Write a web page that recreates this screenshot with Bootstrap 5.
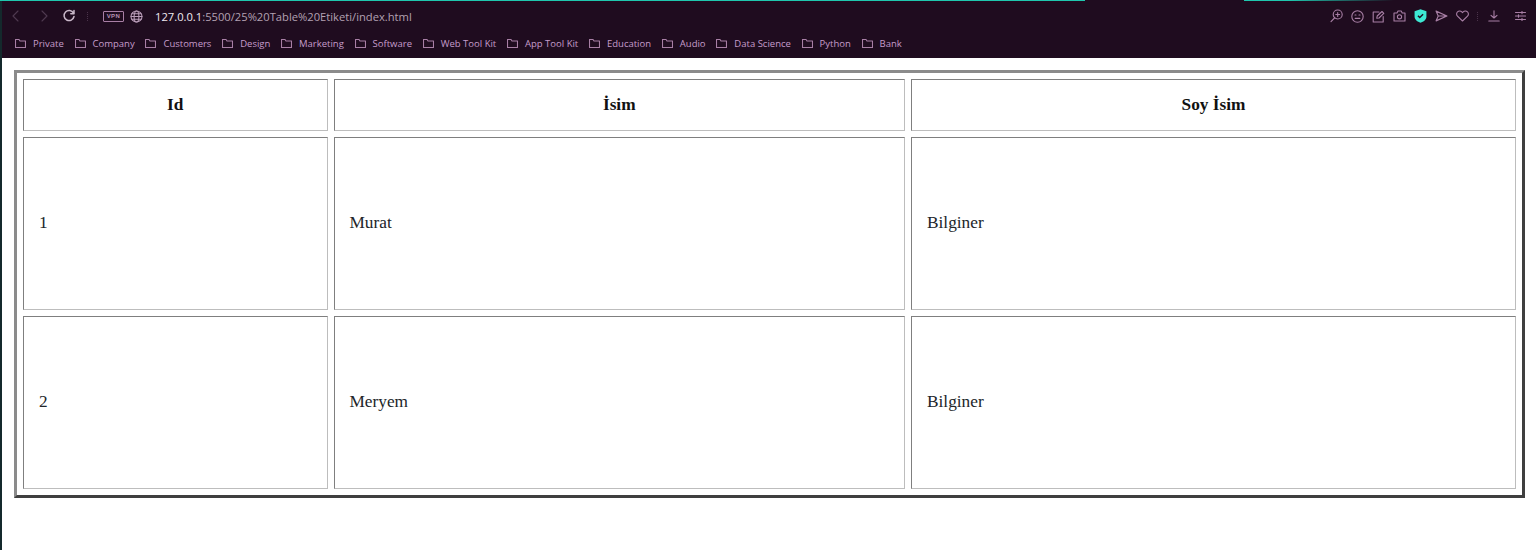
<!DOCTYPE html>
<html lang="tr">
<head>
<meta charset="utf-8">
<title>Table Etiketi</title>
<link href="https://cdn.jsdelivr.net/npm/bootstrap@5.3.0/dist/css/bootstrap.min.css" rel="stylesheet">
<style>
html,body{height:550px;overflow:hidden;background:#fff}
.shell{height:550px;border-left:2px solid #14292c}
.chrome{height:58px;background:#1f0c1f;position:relative}
.topline{position:absolute;top:0;height:1px;background:#1fc7ae}
.tl1{left:-2px;width:1085px}
.tl2{left:1242px;width:150px;background:linear-gradient(90deg,#1fc7ae 0%,#1fc7ae 30%,#1f0c1f 100%)}
.toolbar{height:32px;padding-left:8px;padding-right:10px}
.ic{display:block;fill:none;stroke:#a87fa5;stroke-width:1.1;stroke-linecap:round;stroke-linejoin:round}
.ic-dim{stroke:#4f3a50}
.ic-white{stroke:#c9b8c9;stroke-width:1.5}
.ic-globe{stroke:#b99cb8;margin-left:6px}
.fwd{margin-left:16px}
.reload{margin-left:12px}
.vsep{width:1px;height:9px;border-left:1px dotted #4a334a}
.sep-left{margin-left:11px;margin-right:15px}
.vpnbox{display:block;width:21px;height:11px;border:1px solid #a87fa5;border-radius:1px;font:600 6px/9px "Liberation Sans",sans-serif;letter-spacing:.4px;color:#b58fb2;text-align:center}
.urltext{font:400 11.2px "Open Sans","Liberation Sans",sans-serif;color:#b3a1b2;margin-left:12px;white-space:nowrap}
.urltext b{font-weight:500;color:#f0eaf0}
.bookmarks{height:22px;padding-left:13px;gap:10.750px}
.bm{gap:7px;font:9.5px "Open Sans","Liberation Sans",sans-serif;color:#c69ccb;white-space:nowrap}
.rightgroup{margin-left:auto;gap:8px}
.after-sep{margin-left:2px}
.sliders{margin-left:7px}
.pagewrap{padding:12px 10px 0 12px}
table.gridtable{width:1511px;height:428px;border-collapse:separate;border-spacing:6px;border:3px solid;border-color:#8b8b8b #3f3f3f #3f3f3f #8b8b8b;font-family:"Liberation Serif","Times New Roman",serif;font-size:17.3px;color:#212529;table-layout:fixed}
.gridtable th,.gridtable td{border:1px solid;border-color:#7f7f7f #bdbdbd #bdbdbd #7f7f7f;padding:0 15px}
.gridtable th{text-align:center;font-weight:700;color:#111;height:52px}
.gridtable td{height:172.500px;padding-bottom:2px}
.c1{width:304.500px}.c2{width:571.500px}
</style>
</head>
<body>
<div class="shell">
<header class="chrome">
<div class="topline tl1"></div><div class="topline tl2"></div>
<div class="toolbar d-flex align-items-center">
  <div class="d-flex align-items-center">
    <svg class="ic ic-dim" width="12" height="14" viewBox="0 0 12 14"><path d="M8 2 3 7l5 5"/></svg>
    <svg class="ic ic-dim fwd" width="12" height="14" viewBox="0 0 12 14"><path d="M4 2l5 5-5 5"/></svg>
    <svg class="ic ic-white reload" width="14" height="14" viewBox="0 0 14 14"><path d="M11.500 4.200A5 5 0 1 0 12 7.500M12 1.500v3.200H8.800"/></svg>
    <span class="vsep sep-left"></span>
    <span class="vpnbox">VPN</span>
    <svg class="ic ic-globe" width="13" height="13" viewBox="0 0 13 13"><circle cx="6.500" cy="6.500" r="5.500"/><ellipse cx="6.500" cy="6.500" rx="2.400" ry="5.500"/><path d="M1 6.500h11M1.800 3.700h9.400M1.800 9.300h9.400"/></svg>
    <span class="urltext"><b>127.0.0.1</b>:5500/25%20Table%20Etiketi/index.html</span>
  </div>
  <div class="rightgroup d-flex align-items-center">
    <svg class="ic" width="13" height="14" viewBox="0 0 13 14"><circle cx="7.700" cy="5.500" r="4.500"/><path d="M4.500 9 1 12.700M5.800 5.500h3.800M7.700 3.600v3.800"/></svg>
    <svg class="ic" width="13" height="13" viewBox="0 0 13 13"><circle cx="6.500" cy="6.500" r="5.700"/><path d="M4 5h1M8 5h1M4.200 8.400h4.600"/></svg>
    <svg class="ic" width="13" height="13" viewBox="0 0 13 13"><path d="M7 2H1.200v10h10V6.500M4.800 8.200l.4-2.200L10 1.500l1.800 1.800L7 8z"/></svg>
    <svg class="ic" width="13" height="12" viewBox="0 0 13 12"><path d="M1 3h3l1-2h3.200l1 2H12v8H1z"/><circle cx="6.500" cy="6.800" r="2.100"/></svg>
    <svg width="13" height="14" viewBox="0 0 12 13"><path fill="#3de8d3" d="M6 .3 11.500 2v5c0 3-2.600 4.800-5.500 5.800C3.100 11.800.5 10 .5 7V2z"/><path fill="none" stroke="#1f0c1f" stroke-width="1.300" d="M3.600 6.300l1.700 1.700 3.100-3.100"/></svg>
    <svg class="ic" width="13" height="12" viewBox="0 0 12 11"><path d="M1 1l10 4.500L1 10l2-4.500zM3 5.500h8"/></svg>
    <svg class="ic" width="13" height="12" viewBox="0 0 13 12"><path d="M6.500 11 1.500 6.200a3 3 0 0 1 0-4.300 3 3 0 0 1 4.300 0l.7.700.7-.7a3 3 0 0 1 4.300 0 3 3 0 0 1 0 4.300z"/></svg>
    <span class="vsep"></span>
    <svg class="ic after-sep" width="12" height="12" viewBox="0 0 12 12"><path d="M6 .8V8M3 5.300 6 8l3-2.700M.8 11h10.400"/></svg>
    <svg class="ic sliders" width="11" height="10" viewBox="0 0 11 10"><path d="M.5 1.500h10M.5 5h10M.5 8.500h10M7 .3v2.400M3.500 3.800v2.400M7 7.300v2.400"/></svg>
  </div>
</div>
<nav class="bookmarks d-flex align-items-center">
  <span class="bm d-flex align-items-center"><svg class="ic" width="11" height="9" viewBox="0 0 11 9"><path d="M.5 8.500V.5h3.500l1 1.500h5.500v6.500z"/></svg>Private</span>
  <span class="bm d-flex align-items-center"><svg class="ic" width="11" height="9" viewBox="0 0 11 9"><path d="M.5 8.500V.5h3.500l1 1.500h5.500v6.500z"/></svg>Company</span>
  <span class="bm d-flex align-items-center"><svg class="ic" width="11" height="9" viewBox="0 0 11 9"><path d="M.5 8.500V.5h3.500l1 1.500h5.500v6.500z"/></svg>Customers</span>
  <span class="bm d-flex align-items-center"><svg class="ic" width="11" height="9" viewBox="0 0 11 9"><path d="M.5 8.500V.5h3.500l1 1.500h5.500v6.500z"/></svg>Design</span>
  <span class="bm d-flex align-items-center"><svg class="ic" width="11" height="9" viewBox="0 0 11 9"><path d="M.5 8.500V.5h3.500l1 1.500h5.500v6.500z"/></svg>Marketing</span>
  <span class="bm d-flex align-items-center"><svg class="ic" width="11" height="9" viewBox="0 0 11 9"><path d="M.5 8.500V.5h3.500l1 1.500h5.500v6.500z"/></svg>Software</span>
  <span class="bm d-flex align-items-center"><svg class="ic" width="11" height="9" viewBox="0 0 11 9"><path d="M.5 8.500V.5h3.500l1 1.500h5.500v6.500z"/></svg>Web Tool Kit</span>
  <span class="bm d-flex align-items-center"><svg class="ic" width="11" height="9" viewBox="0 0 11 9"><path d="M.5 8.500V.5h3.500l1 1.500h5.500v6.500z"/></svg>App Tool Kit</span>
  <span class="bm d-flex align-items-center"><svg class="ic" width="11" height="9" viewBox="0 0 11 9"><path d="M.5 8.500V.5h3.500l1 1.500h5.500v6.500z"/></svg>Education</span>
  <span class="bm d-flex align-items-center"><svg class="ic" width="11" height="9" viewBox="0 0 11 9"><path d="M.5 8.500V.5h3.500l1 1.500h5.500v6.500z"/></svg>Audio</span>
  <span class="bm d-flex align-items-center"><svg class="ic" width="11" height="9" viewBox="0 0 11 9"><path d="M.5 8.500V.5h3.500l1 1.500h5.500v6.500z"/></svg>Data Science</span>
  <span class="bm d-flex align-items-center"><svg class="ic" width="11" height="9" viewBox="0 0 11 9"><path d="M.5 8.500V.5h3.500l1 1.500h5.500v6.500z"/></svg>Python</span>
  <span class="bm d-flex align-items-center"><svg class="ic" width="11" height="9" viewBox="0 0 11 9"><path d="M.5 8.500V.5h3.500l1 1.500h5.500v6.500z"/></svg>Bank</span>
</nav>
</header>
<main class="pagewrap">
<table class="gridtable">
  <colgroup><col class="c1"><col class="c2"><col></colgroup>
  <thead><tr><th>Id</th><th>İsim</th><th>Soy İsim</th></tr></thead>
  <tbody>
    <tr><td>1</td><td>Murat</td><td>Bilginer</td></tr>
    <tr><td>2</td><td>Meryem</td><td>Bilginer</td></tr>
  </tbody>
</table>
</main>
</div>
</body>
</html>
